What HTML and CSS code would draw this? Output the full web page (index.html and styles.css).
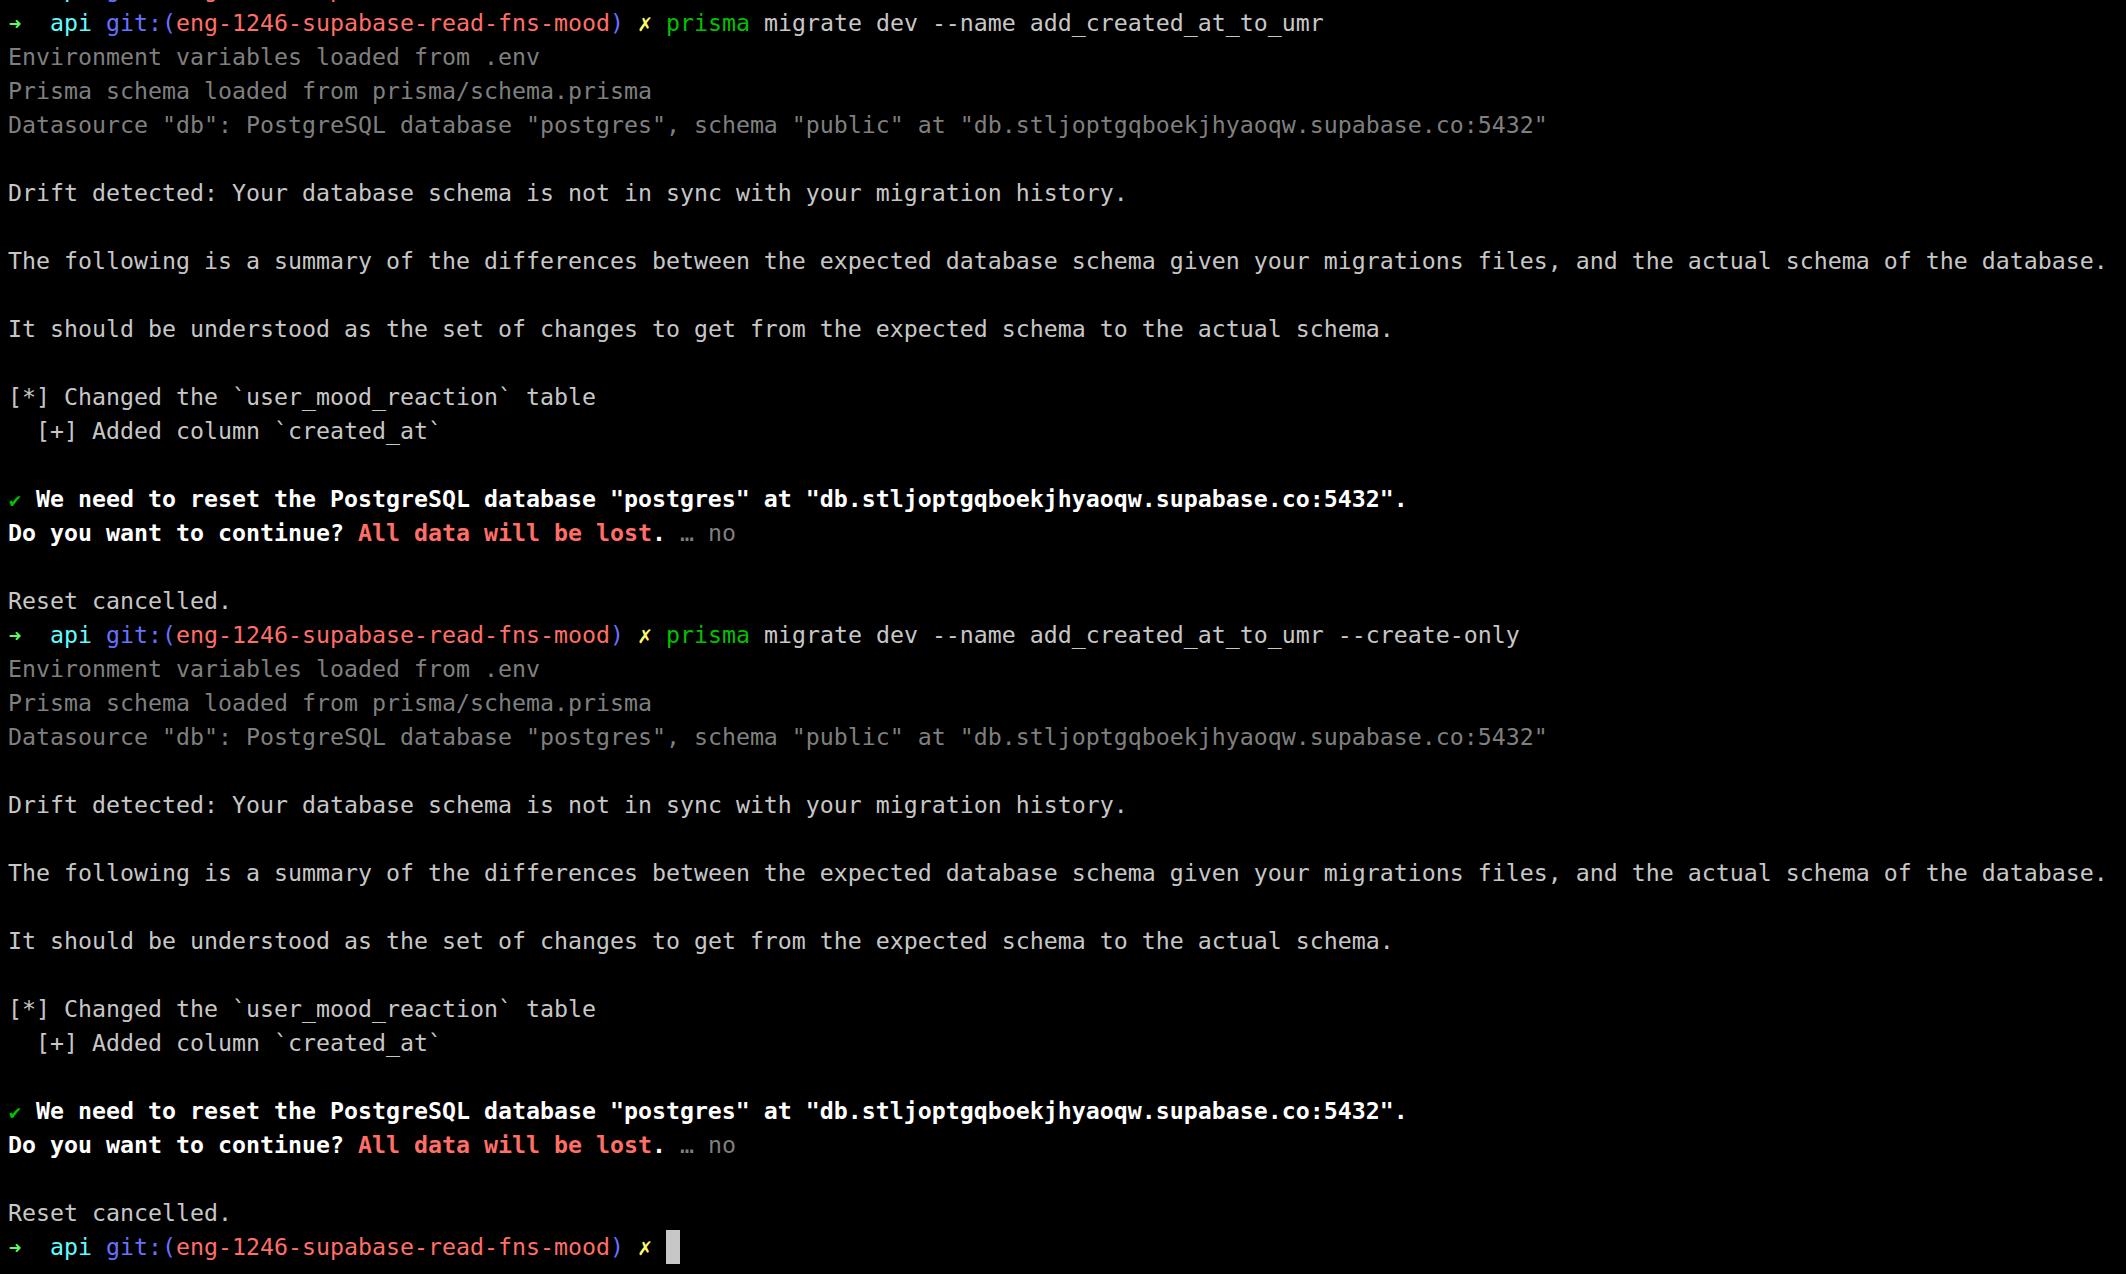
FILE: index.html
```html
<!DOCTYPE html>
<html lang="en">
<head>
    <meta charset="UTF-8">
    <title>Terminal - prisma migrate dev</title>
    <link rel="stylesheet" href="styles.css">
</head>
<body>

<div class="term">
    <div class="line cut"><span class="g arrow"><i>➜</i></span>  <span class="dir">api</span> <span class="git">git:(</span><span class="branch">eng-1246-supabase-read-fns-mood</span><span class="git">)</span> <span class="g dirty">✗</span> </div>
    <div class="line"><span class="g arrow"><i>➜</i></span>  <span class="dir">api</span> <span class="git">git:(</span><span class="branch">eng-1246-supabase-read-fns-mood</span><span class="git">)</span> <span class="g dirty">✗</span> <span class="bin">prisma</span> migrate dev --name add_created_at_to_umr</div>
    <div class="line dim">Environment variables loaded from .env</div>
    <div class="line dim">Prisma schema loaded from prisma/schema.prisma</div>
    <div class="line dim">Datasource "db": PostgreSQL database "postgres", schema "public" at "db.stljoptgqboekjhyaoqw.supabase.co:5432"</div>
    <div class="line"> </div>
    <div class="line">Drift detected: Your database schema is not in sync with your migration history.</div>
    <div class="line"> </div>
    <div class="line">The following is a summary of the differences between the expected database schema given your migrations files, and the actual schema of the database.</div>
    <div class="line"> </div>
    <div class="line">It should be understood as the set of changes to get from the expected schema to the actual schema.</div>
    <div class="line"> </div>
    <div class="line">[*] Changed the `user_mood_reaction` table</div>
    <div class="line">  [+] Added column `created_at`</div>
    <div class="line"> </div>
    <div class="line"><span class="g ok"><i>✔</i></span> <span class="bold">We need to reset the PostgreSQL database "postgres" at "db.stljoptgqboekjhyaoqw.supabase.co:5432".</span></div>
    <div class="line"><span class="bold">Do you want to continue? <span class="red">All data will be lost</span>.</span> <span class="g dim">…</span> <span class="dim">no</span></div>
    <div class="line"> </div>
    <div class="line">Reset cancelled.</div>
    <div class="line"><span class="g arrow"><i>➜</i></span>  <span class="dir">api</span> <span class="git">git:(</span><span class="branch">eng-1246-supabase-read-fns-mood</span><span class="git">)</span> <span class="g dirty">✗</span> <span class="bin">prisma</span> migrate dev --name add_created_at_to_umr --create-only</div>
    <div class="line dim">Environment variables loaded from .env</div>
    <div class="line dim">Prisma schema loaded from prisma/schema.prisma</div>
    <div class="line dim">Datasource "db": PostgreSQL database "postgres", schema "public" at "db.stljoptgqboekjhyaoqw.supabase.co:5432"</div>
    <div class="line"> </div>
    <div class="line">Drift detected: Your database schema is not in sync with your migration history.</div>
    <div class="line"> </div>
    <div class="line">The following is a summary of the differences between the expected database schema given your migrations files, and the actual schema of the database.</div>
    <div class="line"> </div>
    <div class="line">It should be understood as the set of changes to get from the expected schema to the actual schema.</div>
    <div class="line"> </div>
    <div class="line">[*] Changed the `user_mood_reaction` table</div>
    <div class="line">  [+] Added column `created_at`</div>
    <div class="line"> </div>
    <div class="line"><span class="g ok"><i>✔</i></span> <span class="bold">We need to reset the PostgreSQL database "postgres" at "db.stljoptgqboekjhyaoqw.supabase.co:5432".</span></div>
    <div class="line"><span class="bold">Do you want to continue? <span class="red">All data will be lost</span>.</span> <span class="g dim">…</span> <span class="dim">no</span></div>
    <div class="line"> </div>
    <div class="line">Reset cancelled.</div>
    <div class="line"><span class="g arrow"><i>➜</i></span>  <span class="dir">api</span> <span class="git">git:(</span><span class="branch">eng-1246-supabase-read-fns-mood</span><span class="git">)</span> <span class="g dirty">✗</span> <span class="cursor"> </span></div>
</div>

</body>
</html>
```

FILE: styles.css
```css
* {
    box-sizing: border-box;
    margin: 0;
    padding: 0;
}

html,
body {
    background-color: #000;
    height: 100%;
    overflow: hidden;
}

.term {
    padding: 6px 8px;
    font-family: 'DejaVu Sans Mono', 'Liberation Mono', monospace;
    font-size: 23.25px;
    line-height: 34px;
    color: #c7c7c7;
}

.line {
    white-space: pre;
    height: 34px;
}

.line.cut {
    margin-top: -34px;
}

/* single cell glyphs, keep them on the grid */
.g {
    display: inline-block;
    width: 1ch;
    text-align: center;
}

.g i {
    font-style: normal;
}

.arrow {
    color: #5ff967;
}

.arrow i {
    font-size: 21px;
}

.dir {
    color: #5ffdff;
}

.git {
    color: #6871ff;
}

.branch {
    color: #ff6e67;
}

.dirty {
    color: #fefb67;
}

.bin {
    color: #00c200;
}

.dim {
    color: #7f7f7f;
}

.bold {
    font-weight: bold;
    color: #fff;
}

.red {
    color: #ff6e67;
}

.ok {
    color: #00c200;
}

.ok i {
    font-size: 20px;
}

.cursor {
    display: inline-block;
    width: 1ch;
    height: 34px;
    vertical-align: top;
    background-color: #c7c7c7;
}
```
